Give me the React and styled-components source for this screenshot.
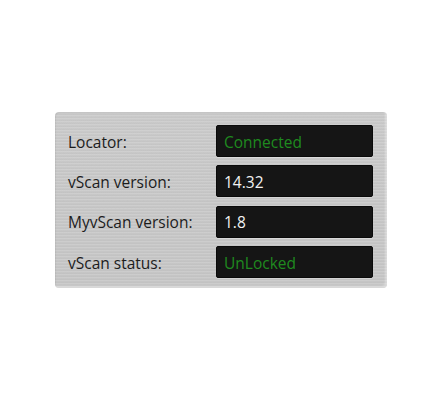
import React from "react";
import styled, { createGlobalStyle } from "styled-components";

const Global = createGlobalStyle`
  html, body { margin: 0; padding: 0; background: #ffffff; }
  body { width: 445px; height: 400px; overflow: hidden; }
`;

const Page = styled.div`
  width: 445px;
  height: 400px;
  padding: 112px 0 0 55px;
  box-sizing: border-box;
`;

const Panel = styled.div`
  width: 332px;
  height: 176px;
  box-sizing: border-box;
  padding: 13px 15px 0 13px;
  border-radius: 4px;
  background:
    repeating-linear-gradient(
      180deg,
      rgba(255, 255, 255, 0.12) 0px,
      rgba(255, 255, 255, 0.12) 1px,
      rgba(0, 0, 0, 0.035) 2px,
      rgba(0, 0, 0, 0.0) 3px
    ),
    linear-gradient(180deg, #cacaca 0%, #c7c7c7 50%, #c5c5c5 100%);
  box-shadow: inset -2px -2px 2px rgba(255, 255, 255, 0.35),
    inset 1px 1px 1px rgba(0, 0, 0, 0.06);
  display: flex;
  flex-direction: column;
  gap: 8.4px;
`;

const Row = styled.div`
  display: grid;
  grid-template-columns: 148px 157px;
  align-items: center;
  height: 32px;
`;

const Label = styled.span`
  font-family: "Open Sans", "Noto Sans", sans-serif;
  font-size: 15.5px;
  color: #1c1c1c;
  padding-top: 1px;
`;

const Field = styled.div`
  height: 32px;
  box-sizing: border-box;
  background: #151515;
  border: 1px solid #0a0a0a;
  border-radius: 2px;
  box-shadow: 0 1px 0 rgba(255, 255, 255, 0.25);
  display: flex;
  align-items: center;
  padding: 1px 0 0 7px;
  font-family: "Open Sans", "Noto Sans", sans-serif;
  font-size: 15.5px;
  color: ${(p) => (p.$green ? "#1f8a1f" : "#f2f2f2")};
`;

const rows = [
  { label: "Locator:", value: "Connected", green: true },
  { label: "vScan version:", value: "14.32" },
  { label: "MyvScan version:", value: "1.8" },
  { label: "vScan status:", value: "UnLocked", green: true },
];

export default function App() {
  return (
    <>
      <Global />
      <Page>
        <Panel>
          {rows.map((r) => (
            <Row key={r.label}>
              <Label>{r.label}</Label>
              <Field $green={r.green}>{r.value}</Field>
            </Row>
          ))}
        </Panel>
      </Page>
    </>
  );
}
